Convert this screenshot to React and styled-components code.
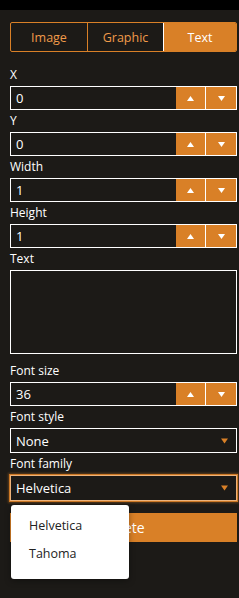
import React from "react";
import styled, { createGlobalStyle } from "styled-components";

const ORANGE = "#d98027";
const BG = "#1c1a17";

const Global = createGlobalStyle`
  html, body { margin: 0; padding: 0; background: ${BG}; }
  body { font-family: "Open Sans", "Noto Sans", sans-serif; color: #fff; }
  * { box-sizing: border-box; }
`;

const TopBar = styled.div`
  height: 10px;
  background: #000;
`;

const Panel = styled.div`
  position: relative;
  padding: 12px 2px 0 10px;
  height: 588px;
  display: flex;
  flex-direction: column;
`;

const Tabs = styled.div`
  display: grid;
  grid-template-columns: 76px 76px 1fr;
  height: 30px;
  border: 1px solid ${ORANGE};
  border-radius: 2px;
  overflow: hidden;
  margin-bottom: 15px;
`;

const Tab = styled.div`
  display: flex;
  align-items: center;
  justify-content: center;
  font-size: 12.5px;
  color: ${(p) => (p.$active ? "#fff" : "#f09a4a")};
  background: ${(p) => (p.$active ? ORANGE : "transparent")};
  border-left: ${(p) => (p.$first ? "none" : p.$active ? "1px solid #fff" : `1px solid ${ORANGE}`)};
`;

const Field = styled.div`
  display: flex;
  flex-direction: column;
  gap: 3px;
  margin-bottom: ${(p) => p.$mb ?? 3}px;
  position: relative;
`;

const Label = styled.div`
  font-size: 12px;
  line-height: 16px;
  color: #fff;
`;

const NumberBox = styled.div`
  display: flex;
  height: 24px;
  border: 1px solid #fff;
`;

const Value = styled.div`
  flex: 1;
  font-size: 13px;
  line-height: 22px;
  padding-left: 5px;
  color: #fff;
`;

const Spin = styled.div`
  width: ${(p) => p.$w}px;
  background: ${ORANGE};
  display: flex;
  align-items: center;
  justify-content: center;
  border-left: ${(p) => (p.$sep ? "1px solid #fff" : "none")};
`;

const Tri = ({ up, color = "#fff", w = 7, h = 5 }) => (
  <svg width={w} height={h} viewBox="0 0 7 5">
    {up ? <polygon points="3.5,0 7,5 0,5" fill={color} /> : <polygon points="0,0 7,0 3.5,5" fill={color} />}
  </svg>
);

const TextArea = styled.div`
  height: 84px;
  border: 1px solid #fff;
`;

const Select = styled.div`
  display: flex;
  align-items: center;
  justify-content: space-between;
  height: ${(p) => (p.$focus ? 26 : 25)}px;
  padding: 0 8px 0 5px;
  border: 1px solid ${(p) => (p.$focus ? "#eeb37a" : "#fff")};
  box-shadow: ${(p) =>
    p.$focus ? `0 0 0 1px rgba(217,128,39,0.9), 0 0 2px 2px rgba(217,128,39,0.35)` : "none"};
  font-size: 13px;
  color: #fff;
`;

const DeleteButton = styled.div`
  height: 29px;
  background: ${ORANGE};
  color: #fff;
  font-size: 14px;
  display: flex;
  align-items: center;
  justify-content: center;
`;

const Menu = styled.div`
  position: absolute;
  left: 1px;
  top: 49px;
  width: 118px;
  height: 74px;
  background: #fff;
  border-radius: 3px;
  box-shadow: 0 2px 6px rgba(0, 0, 0, 0.35);
  padding-top: 7px;
  z-index: 5;
`;

const MenuItem = styled.div`
  height: 28px;
  line-height: 28px;
  padding-left: 18px;
  font-size: 12.5px;
  color: #222;
`;

const NumberField = ({ label, value }) => (
  <Field>
    <Label>{label}</Label>
    <NumberBox>
      <Value>{value}</Value>
      <Spin $w={29}>
        <Tri up />
      </Spin>
      <Spin $w={31} $sep>
        <Tri />
      </Spin>
    </NumberBox>
  </Field>
);

export default function App() {
  return (
    <>
      <Global />
      <TopBar />
      <Panel>
        <Tabs>
          <Tab $first>Image</Tab>
          <Tab>Graphic</Tab>
          <Tab $active>Text</Tab>
        </Tabs>
        <NumberField label="X" value="0" />
        <NumberField label="Y" value="0" />
        <NumberField label="Width" value="1" />
        <NumberField label="Height" value="1" />
        <Field $mb={9}>
          <Label>Text</Label>
          <TextArea />
        </Field>
        <NumberField label="Font size" value="36" />
        <Field>
          <Label>Font style</Label>
          <Select>
            None
            <Tri color={ORANGE} w={7} h={6} />
          </Select>
        </Field>
        <Field $mb={12}>
          <Label>Font family</Label>
          <Select $focus>
            Helvetica
            <Tri color={ORANGE} w={7} h={6} />
          </Select>
          <Menu>
            <MenuItem>Helvetica</MenuItem>
            <MenuItem>Tahoma</MenuItem>
          </Menu>
        </Field>
        <DeleteButton>Delete</DeleteButton>
      </Panel>
    </>
  );
}
